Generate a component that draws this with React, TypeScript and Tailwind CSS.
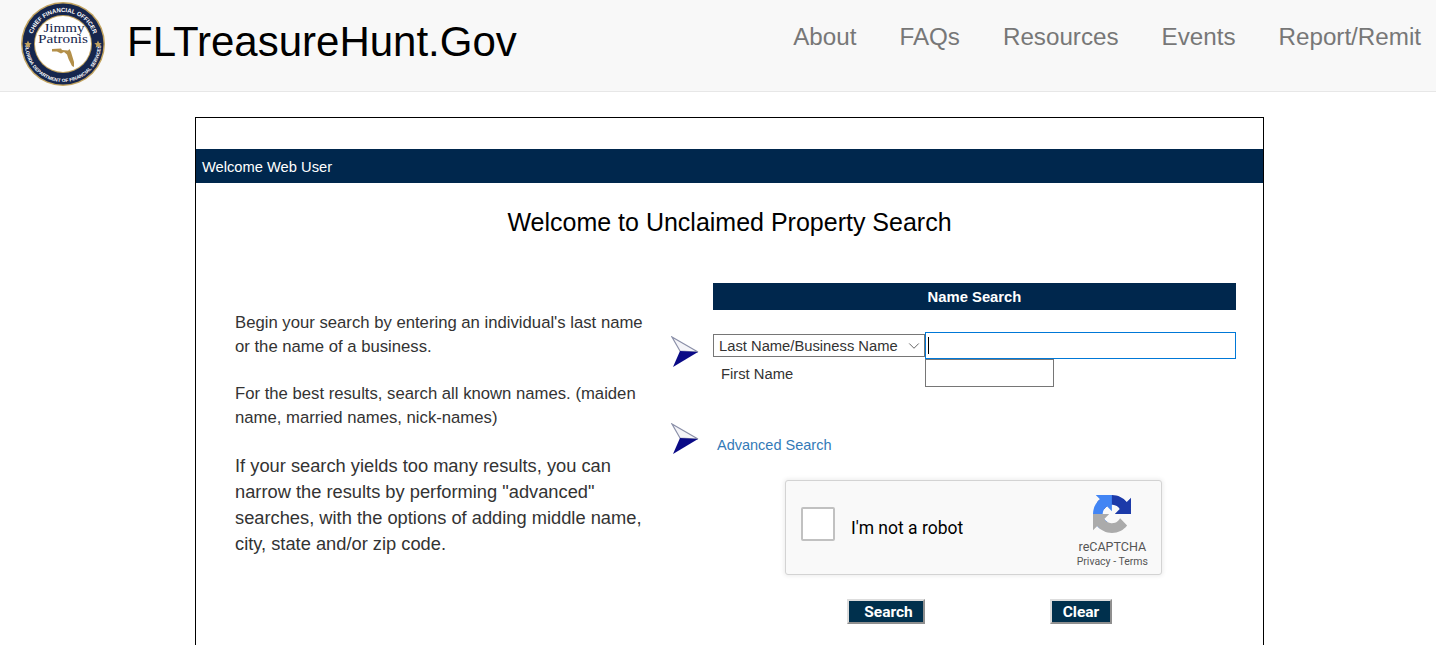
import { ChevronDown } from "lucide-react";

function Seal() {
  return (
    <svg viewBox="0 0 84 84" className="w-[84px] h-[84px] shrink-0">
      <defs>
        <path id="sealTop" d="M 11.9 52.9 A 32 32 0 1 1 72.1 52.9" />
        <path id="sealBottom" d="M 6.3 29 A 38 38 0 1 0 77.7 29" />
      </defs>
      <circle cx="42" cy="42" r="42" fill="#c2a35f" />
      <circle cx="42" cy="42" r="40.5" fill="#16264d" />
      <circle cx="42" cy="42" r="29" fill="#c2a35f" />
      <circle cx="42" cy="42" r="28" fill="#ffffff" />
      <text fontFamily="'Liberation Sans', sans-serif" fontSize="6" fontWeight="700" fill="#ffffff" textAnchor="middle">
        <textPath href="#sealTop" startOffset="50%">CHIEF FINANCIAL OFFICER</textPath>
      </text>
      <text fontFamily="'Liberation Sans', sans-serif" fontSize="4.8" fontWeight="700" fill="#ffffff" textAnchor="middle">
        <textPath href="#sealBottom" startOffset="50%">FLORIDA DEPARTMENT OF FINANCIAL SERVICES</textPath>
      </text>
      <path d="M7 38.5l1.1 2.6 2.6.2-2 1.8.6 2.6-2.3-1.4-2.3 1.4.6-2.6-2-1.8 2.6-.2z" fill="#c2a35f" />
      <path d="M77 38.5l1.1 2.6 2.6.2-2 1.8.6 2.6-2.3-1.4-2.3 1.4.6-2.6-2-1.8 2.6-.2z" fill="#c2a35f" />
      <text x="43" y="30" fontFamily="'Liberation Serif', serif" fontSize="12" fill="#16264d" textAnchor="middle" textLength="41" lengthAdjust="spacingAndGlyphs">Jimmy</text>
      <text x="42" y="41" fontFamily="'Liberation Serif', serif" fontSize="12" fill="#16264d" textAnchor="middle" textLength="50" lengthAdjust="spacingAndGlyphs">Patronis</text>
      <path d="M31 47 L40 46.5 L41 48 L47 48.5 L48.5 47 L50 50 L53 60 L53 65 L51 64 L47.5 57 L46 52.5 L43 50 L40 51.5 L36 49.5 L31 49.5 Z" fill="#b4904a" />
    </svg>
  );
}

function Arrow() {
  return (
    <svg viewBox="0 0 28 32" className="w-[28px] h-[32px] shrink-0">
      <path d="M1 1 L27 16 L9 15 Z" fill="#f4f4f8" stroke="#8a8fa8" strokeWidth="1.2" />
      <path d="M27 16 L2 31 L9 15 Z" fill="#0a0a86" />
    </svg>
  );
}

function RecaptchaLogo() {
  return (
    <svg viewBox="0 0 64 64" className="w-[38px] h-[38px]">
      <path d="M64 31.955l-.033-1.37V4.687l-7.16 7.16C50.948 4.674 42.033.093 32.05.093c-10.4 0-19.622 4.96-25.458 12.64l11.736 11.86a15.55 15.55 0 0 1 4.754-5.334c2.05-1.6 4.952-2.906 8.968-2.906.485 0 .86.057 1.135.163 4.976.393 9.288 3.14 11.828 7.124l-8.307 8.307c10.522-.04 22.4-.066 27.295.004" fill="#1c3aa9" />
      <path d="M31.862.001l-1.37.033H4.594l7.16 7.16C4.58 13.053 0 21.968 0 31.951c0 10.4 4.96 19.622 12.64 25.458l11.86-11.736a15.55 15.55 0 0 1-5.334-4.754c-1.6-2.05-2.906-4.952-2.906-8.968 0-.485.057-.86.163-1.135.393-4.976 3.14-9.288 7.124-11.828l8.307 8.307c-.04-10.522-.066-22.4.004-27.295" fill="#4285f4" />
      <path d="M.001 31.953l.033 1.37v25.898l7.16-7.16c5.86 7.173 14.774 11.754 24.757 11.754 10.4 0 19.622-4.96 25.458-12.64l-11.736-11.86a15.55 15.55 0 0 1-4.754 5.334c-2.05 1.6-4.952 2.906-8.968 2.906-.485 0-.86-.057-1.135-.163-4.976-.393-9.288-3.14-11.828-7.124l8.307-8.307c-10.522.04-22.4.066-27.295-.004" fill="#ababab" />
    </svg>
  );
}

export default function App() {
  const navItems = ["About", "FAQs", "Resources", "Events", "Report/Remit"];

  return (
    <div className="h-[645px] overflow-hidden bg-white font-['Liberation_Sans',Arial,sans-serif] text-[#333333]">
      {/* Navbar */}
      <header className="h-[92px] flex bg-[#f8f8f8] border-b border-[#e7e7e7]">
        <div className="flex items-start pl-[21px] pt-[2px]">
          <Seal />
          <span className="ml-[22px] mt-[12px] text-[42px] leading-[56px] text-black">FLTreasureHunt.Gov</span>
        </div>
        <nav className="ml-auto flex gap-[43px] pr-[15px] pt-[21px] text-[24.2px] leading-[32px] text-[#777777]">
          {navItems.map((item) => (
            <a key={item}>{item}</a>
          ))}
        </nav>
      </header>

      {/* Main box */}
      <main className="ml-[195px] mt-[25px] w-[1069px] h-[700px] border border-black pt-[31px]">
        <div className="h-[34px] flex items-center bg-[#00274d] pl-[6px] pt-[3px] text-[14.7px] text-white">Welcome Web User</div>
        <h1 className="mt-[22px] text-center text-[25px] leading-[34px] text-black">Welcome to Unclaimed Property Search</h1>

        <div className="flex mt-[44px]">
          {/* Help text */}
          <div className="ml-[39px] w-[415px] pt-[28px] text-[16.7px]">
            <p className="leading-[24px]">Begin your search by entering an individual's last name or the name of a business.</p>
            <p className="mt-[23px] leading-[24px]">For the best results, search all known names. (maiden name, married names, nick-names)</p>
            <p className="mt-[23px] text-[18.3px] leading-[26px]">If your search yields too many results, you can narrow the results by performing "advanced" searches, with the options of adding middle name, city, state and/or zip code.</p>
          </div>

          {/* Search form */}
          <div className="ml-[21px] w-[565px] flex flex-col">
            <div className="ml-[42px] w-[523px] h-[27px] flex items-center justify-center bg-[#00274d] pt-[1px] text-[14.8px] font-bold text-white">Name Search</div>

            <div className="flex mt-[22px]">
              <div className="w-[42px] pt-[4px]">
                <Arrow />
              </div>
              <div className="flex-1">
                <div className="flex">
                  <div className="mt-[2px] w-[212px] h-[23px] flex items-center justify-between border border-[#767676] pl-[5px] pr-[1px] pt-[1px] text-[14.75px]">
                    <span>Last Name/Business Name</span>
                    <ChevronDown className="w-[18px] h-[18px] text-[#555555]" strokeWidth={1.2} />
                  </div>
                  <div className="w-[311px] h-[27px] flex items-center border border-[#0078d7] pl-[2px]">
                    <span className="w-px h-[17px] bg-black" />
                  </div>
                </div>
                <div className="flex">
                  <div className="w-[212px] pl-[8px] pt-[3px] text-[14.75px] leading-[24px]">First Name</div>
                  <div className="w-[129px] h-[28px] border border-[#767676]" />
                </div>
              </div>
            </div>

            <div className="flex mt-[36px]">
              <div className="w-[42px]">
                <Arrow />
              </div>
              <a className="ml-[4px] mt-[12px] text-[14.5px] leading-[20px] text-[#337ab7]">Advanced Search</a>
            </div>

            {/* reCAPTCHA */}
            <div className="ml-[114px] mt-[25px] w-[377px] h-[95px] flex items-center justify-between rounded-[3px] border border-[#d3d3d3] bg-[#f9f9f9] pl-[15px] pr-[13px] shadow-[0_0_4px_1px_rgba(0,0,0,0.08)]">
              <div className="flex items-center">
                <div className="mb-[8px] w-[34px] h-[34px] rounded-[2px] border-[2px] border-[#c1c1c1] bg-white" />
                <span className="ml-4 mt-[1px] font-['Roboto',sans-serif] text-[17.5px] text-black">I'm not a robot</span>
              </div>
              <div className="flex flex-col items-center pt-[9px] font-['Roboto',sans-serif] text-[#555555]">
                <RecaptchaLogo />
                <span className="mt-[6px] text-[12.5px] leading-[16px]">reCAPTCHA</span>
                <span className="text-[10.5px] leading-[14px]">Privacy - Terms</span>
              </div>
            </div>

            <div className="flex mt-[24px]">
              <button className="ml-[176px] w-[78px] h-[25px] border-2 border-t-[#dddddd] border-l-[#dddddd] border-r-[#8f8f8f] border-b-[#8f8f8f] bg-[#00304d] pl-[5px] font-['Roboto',sans-serif] text-[15.5px] leading-[20px] font-bold text-white">Search</button>
              <button className="ml-[125px] w-[62px] h-[25px] border-2 border-t-[#dddddd] border-l-[#dddddd] border-r-[#8f8f8f] border-b-[#8f8f8f] bg-[#00304d] font-['Roboto',sans-serif] text-[15.5px] leading-[20px] font-bold text-white">Clear</button>
            </div>
          </div>
        </div>
      </main>
    </div>
  );
}
